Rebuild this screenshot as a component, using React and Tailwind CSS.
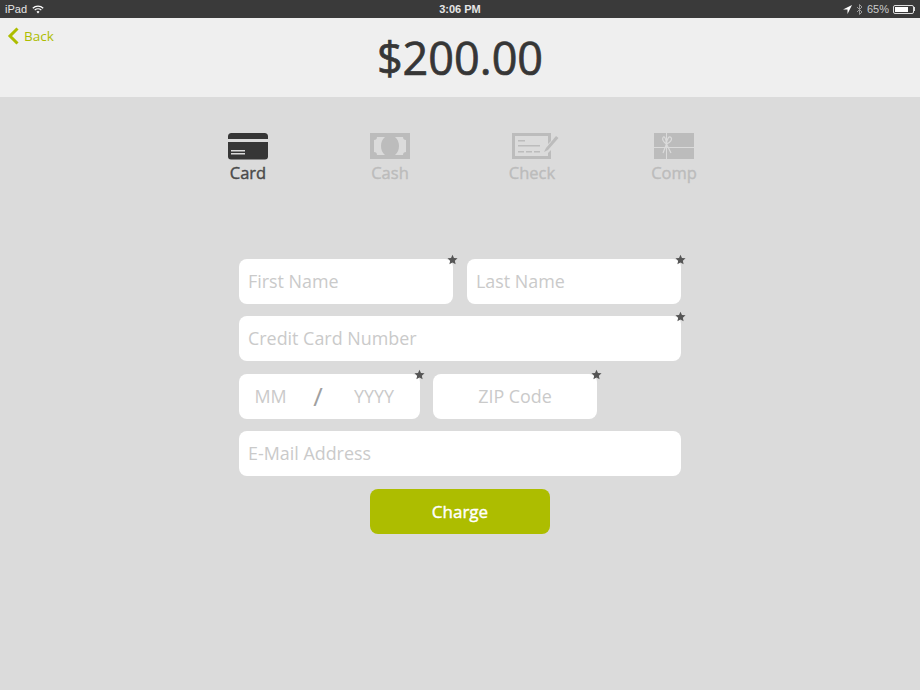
import React from 'react'

const Star = () => (
  <svg viewBox="0 0 24 24" className="absolute -top-[5px] -right-[5px] w-[11px] h-[11px] fill-[#555555]">
    <path d="M12 1.500l3.200 7.200 7.800.8-5.900 5.200 1.700 7.700L12 18.400l-6.800 4 1.700-7.700L1 9.500l7.800-.8z" />
  </svg>
)

const Field = ({ placeholder, className = '', center, required }) => (
  <div className={`relative h-[45px] bg-white rounded-lg flex items-center text-[17.900px] text-[#cacaca] ${center ? 'justify-center' : 'pl-[9px]'} ${className}`}>
    {placeholder}
    {required && <Star />}
  </div>
)

const CardIcon = () => (
  <svg width="40" height="27" viewBox="0 0 40 27">
    <path d="M0 6V3.500A3.500 3.500 0 0 1 3.500 0h33A3.500 3.500 0 0 1 40 3.500V6z" fill="#363636" />
    <path d="M0 9h40v14.500a3 3 0 0 1-3 3H3a3 3 0 0 1-3-3z" fill="#363636" />
    <rect x="3" y="17" width="14" height="1.500" fill="#dbdbdb" />
    <rect x="3" y="20" width="14" height="1.500" fill="#dbdbdb" />
  </svg>
)

const CashIcon = () => (
  <svg width="40" height="27" viewBox="0 0 40 27">
    <rect width="40" height="26" fill="#bcbcbc" />
    <path d="M7 4h8c-2.500 2-4 5.300-4 9s1.500 7 4 9H7c0-2-1-3-3-3V7c2 0 3-1 3-3z" fill="#dbdbdb" />
    <path d="M33 4h-8c2.500 2 4 5.300 4 9s-1.500 7-4 9h8c0-2 1-3 3-3V7c-2 0-3-1-3-3z" fill="#dbdbdb" />
  </svg>
)

const CheckIcon = () => (
  <svg width="48" height="27" viewBox="0 0 48 27">
    <path fillRule="evenodd" fill="#bcbcbc" d="M1 0h39v8l-3 3V3H4v20h33v-3l3-3v9H1z" />
    <rect x="7" y="7" width="7" height="1.500" fill="#bcbcbc" />
    <rect x="7" y="12" width="22" height="1.500" fill="#bcbcbc" />
    <rect x="7" y="18" width="6" height="1.500" fill="#bcbcbc" />
    <rect x="15" y="18" width="6" height="1.500" fill="#bcbcbc" />
    <rect x="23" y="18" width="6" height="1.500" fill="#bcbcbc" />
    <path d="M33 19l2-4L45 3l2.500 2-10.500 12z" fill="#bcbcbc" />
  </svg>
)

const CompIcon = () => (
  <svg width="40" height="27" viewBox="0 0 40 27">
    <rect width="40" height="26" fill="#bcbcbc" />
    <rect y="14" width="40" height="1" fill="#dbdbdb" />
    <rect x="12" width="1" height="26" fill="#dbdbdb" />
    <g fill="none" stroke="#dbdbdb" strokeWidth="1.200">
      <path d="M12.500 11C9 9 8 6 9 4.500s3 0 3.500 6.500c.5-6.500 3-8 4.500-6.500s0 4.500-4.500 6.500" />
      <path d="M12.500 11L9 20M12.500 11L17 20" />
    </g>
  </svg>
)

const tabs = [
  { label: 'Card', icon: <CardIcon />, active: true },
  { label: 'Cash', icon: <CashIcon /> },
  { label: 'Check', icon: <CheckIcon />, iconClass: 'ml-[5px]' },
  { label: 'Comp', icon: <CompIcon /> },
]

const App = () => {
  return (
    <div className="w-[920px] h-[690px] overflow-hidden bg-[#dbdbdb] font-['Open_Sans',sans-serif]">
      <div className="relative h-[18px] bg-[#3a3a3a] text-[#e6e6e6] text-[11px] font-['Liberation_Sans',sans-serif] flex items-center justify-between pl-[5px] pr-[5px]">
        <div className="flex items-center gap-[5px]">
          <span>iPad</span>
          <svg width="12" height="9" viewBox="0 0 12 9" fill="none" stroke="#fff" strokeWidth="1.300">
            <path d="M.8 3.200a7.500 7.500 0 0 1 10.400 0M2.700 5.100a4.800 4.800 0 0 1 6.600 0" />
            <path d="M6 8.500L4.500 6.800a2.200 2.200 0 0 1 3 0z" fill="#fff" stroke="none" />
          </svg>
        </div>
        <span className="absolute left-0 right-0 text-center font-bold">3:06 PM</span>
        <div className="flex items-center gap-[4px]">
          <svg width="9" height="9" viewBox="0 0 9 9"><path d="M9 0L0 4.500h4.500V9z" fill="#fff" /></svg>
          <svg width="7" height="11" viewBox="0 0 7 11" fill="none" stroke="#999" strokeWidth="1"><path d="M1 3l5 5-2.500 2.500v-10L6 3 1 8" /></svg>
          <span className="text-[#cccccc]">65%</span>
          <div className="flex items-center">
            <div className="w-[21px] h-[9px] border border-[#dddddd] rounded-[2px] p-px">
              <div className="w-[13px] h-full bg-white" />
            </div>
            <div className="w-px h-[4px] bg-[#dddddd]" />
          </div>
        </div>
      </div>

      <div className="relative h-[79px] bg-[#efefef] flex items-center justify-center">
        <div className="absolute top-[8px] left-[7px] flex items-center gap-[5px] text-[#adbd00] text-[13.500px]">
          <svg width="12" height="18" viewBox="0 0 12 18" fill="none" stroke="#adbd00" strokeWidth="3"><path d="M10.500 1.500L3 9l7.500 7.500" /></svg>
          <span>Back</span>
        </div>
        <h1 className="text-[45px] text-[#363636] leading-none [-webkit-text-stroke:0.7px_#363636]">$200.00</h1>
      </div>

      <div className="flex justify-center pt-[36px] pl-[2px]">
        {tabs.map(tab => (
          <div key={tab.label} className="w-[142px] flex flex-col items-center">
            <div className={`h-[27px] flex justify-center ${tab.iconClass || ''}`}>{tab.icon}</div>
            <span className={`mt-px text-[16.500px] ${tab.active ? 'text-[#4a4a4a] [-webkit-text-stroke:0.4px_#4a4a4a]' : 'text-[#bcbcbc] [-webkit-text-stroke:0.4px_#bcbcbc]'}`}>{tab.label}</span>
          </div>
        ))}
      </div>

      <div className="w-[442px] mx-auto mt-[73px] flex flex-col gap-[12.500px]">
        <div className="flex gap-[14px]">
          <Field placeholder="First Name" className="w-[214px]" required />
          <Field placeholder="Last Name" className="w-[214px]" required />
        </div>
        <Field placeholder="Credit Card Number" required />
        <div className="flex gap-[13px]">
          <div className="relative w-[181px] h-[45px] bg-white rounded-lg flex items-center text-[17.900px] text-[#cacaca]">
            <span className="w-[63px] text-center">MM</span>
            <span className="w-[32px] text-center text-[26px] text-[#a0a0a0]">/</span>
            <span className="ml-[20px]">YYYY</span>
            <Star />
          </div>
          <Field placeholder="ZIP Code" className="w-[164px]" center required />
        </div>
        <Field placeholder="E-Mail Address" />
        <button className="w-[180px] h-[45px] mx-auto bg-[#adbd00] rounded-lg text-white text-[17px] [-webkit-text-stroke:0.4px_#ffffff]">Charge</button>
      </div>
    </div>
  )
}

export default App
